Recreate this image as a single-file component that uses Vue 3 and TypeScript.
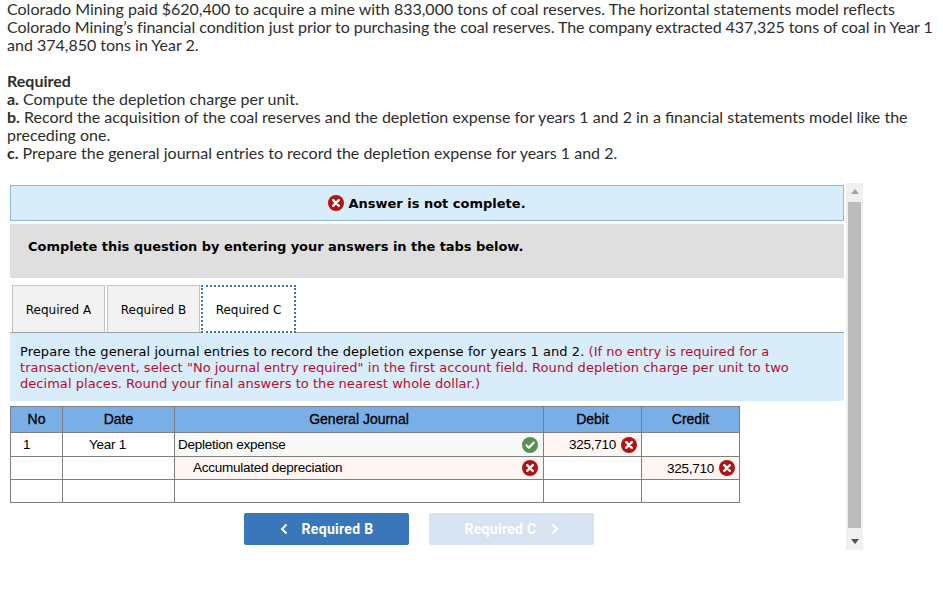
<script setup lang="ts">
interface Tab { label: string; active: boolean }
const tabs: Tab[] = [
  { label: 'Required A', active: false },
  { label: 'Required B', active: false },
  { label: 'Required C', active: true },
]
</script>

<template>
  <div class="page">
    <section class="problem">
      <p>Colorado Mining paid $620,400 to acquire a mine with 833,000 tons of coal reserves. The horizontal statements model reflects<br /><span class="tight">Colorado Mining’s financial condition just prior to purchasing the coal reserves. The company extracted 437,325 tons of coal in Year 1</span><br />and 374,850 tons in Year 2.</p>
      <p class="req-title"><b>Required</b></p>
      <p><b>a.</b> Compute the depletion charge per unit.<br /><b>b.</b> Record the acquisition of the coal reserves and the depletion expense for years 1 and 2 in a financial statements model like the<br />preceding one.<br /><b>c.</b> Prepare the general journal entries to record the depletion expense for years 1 and 2.</p>
    </section>

    <div class="workspace">
      <main class="panel">
        <div class="alert">
          <svg class="ic" viewBox="0 0 16 16"><circle cx="8" cy="8" r="8" fill="#b31312" /><path d="M5.2 5.2l5.6 5.6M10.8 5.2l-5.6 5.6" stroke="#fff" stroke-width="2.4" stroke-linecap="round" /></svg>
          <b>Answer is not complete.</b>
        </div>
        <div class="complete"><b>Complete this question by entering your answers in the tabs below.</b></div>
        <div class="tabs">
          <div v-for="t in tabs" :key="t.label" class="tab" :class="{ active: t.active }">{{ t.label }}</div>
        </div>
        <div class="instr"><span class="blk">Prepare the general journal entries to record the depletion expense for years 1 and 2. </span><span class="red">(If no entry is required for a<br />transaction/event, select "No journal entry required" in the first account field. Round depletion charge per unit to two<br />decimal places. Round your final answers to the nearest whole dollar.)</span></div>

        <table class="journal">
          <colgroup><col class="c1" /><col class="c2" /><col class="c3" /><col class="c4" /><col class="c5" /></colgroup>
          <thead>
            <tr><th>No</th><th>Date</th><th>General Journal</th><th>Debit</th><th>Credit</th></tr>
          </thead>
          <tbody>
            <tr class="r1">
              <td class="no">1</td>
              <td class="date">Year 1</td>
              <td class="acct ok"><div class="cell"><span>Depletion expense</span>
                <svg class="ic" viewBox="0 0 16 16"><circle cx="8" cy="8" r="8" fill="#5b8f57" /><path d="M4.4 8.3l2.5 2.4 4.7-5" fill="none" stroke="#fff" stroke-width="2.2" stroke-linecap="round" stroke-linejoin="round" /></svg></div></td>
              <td class="amt bad"><div class="cell end">325,710
                <svg class="ic" viewBox="0 0 16 16"><circle cx="8" cy="8" r="8" fill="#b31312" /><path d="M5.2 5.2l5.6 5.6M10.8 5.2l-5.6 5.6" stroke="#fff" stroke-width="2.4" stroke-linecap="round" /></svg></div></td>
              <td></td>
            </tr>
            <tr class="r2">
              <td></td>
              <td></td>
              <td class="acct bad"><div class="cell"><span class="indent">Accumulated depreciation</span>
                <svg class="ic" viewBox="0 0 16 16"><circle cx="8" cy="8" r="8" fill="#b31312" /><path d="M5.2 5.2l5.6 5.6M10.8 5.2l-5.6 5.6" stroke="#fff" stroke-width="2.4" stroke-linecap="round" /></svg></div></td>
              <td></td>
              <td class="amt bad"><div class="cell end">325,710
                <svg class="ic" viewBox="0 0 16 16"><circle cx="8" cy="8" r="8" fill="#b31312" /><path d="M5.2 5.2l5.6 5.6M10.8 5.2l-5.6 5.6" stroke="#fff" stroke-width="2.4" stroke-linecap="round" /></svg></div></td>
            </tr>
            <tr class="r3"><td></td><td></td><td></td><td></td><td></td></tr>
          </tbody>
        </table>

        <div class="nav">
          <button class="btn prev"><svg class="chev" viewBox="0 0 8 12"><path d="M6.5 1.5L2 6l4.5 4.5" fill="none" stroke="#fff" stroke-width="2" /></svg>Required B</button>
          <button class="btn next">Required C<svg class="chev" viewBox="0 0 8 12"><path d="M1.5 1.5L6 6l-4.5 4.5" fill="none" stroke="#fff" stroke-width="2" /></svg></button>
        </div>
      </main>

      <aside class="scrollbar">
        <svg class="arrow" viewBox="0 0 8 5"><path d="M4 0l4 5H0z" fill="#a3a3a3" /></svg>
        <div class="thumb"></div>
        <svg class="arrow" viewBox="0 0 8 5"><path d="M0 0h8L4 5z" fill="#505050" /></svg>
      </aside>
    </div>
  </div>
</template>

<style>
html, body { background: #fff; }
</style>

<style scoped>
.page { width: 943px; height: 604px; overflow: hidden; background: #fff; }
.problem {
  padding: 0 0 0 7px;
  font: 16px/18px Lato, "Open Sans", sans-serif;
  color: #2d2d2d;
  white-space: nowrap;
}
.problem p { margin: 0; }
.problem .req-title { margin-top: 18px; }
.problem b { font-weight: 700; color: #2d2d2d; }
.tight { letter-spacing: -0.045px; }
.workspace { display: flex; align-items: flex-start; margin: 23px 0 0 10px; gap: 2px; }
.panel { width: 834px; flex: none; }
.alert {
  height: 36px;
  box-sizing: border-box;
  border: 1px solid #8cb9e6;
  background: #d9ecfa;
  display: flex;
  align-items: center;
  justify-content: center;
  gap: 4px;
  font: 700 13px "DejaVu Sans", Verdana, sans-serif;
  color: #000;
}
.ic { width: 16px; height: 16px; flex: none; display: block; }
.complete {
  margin-top: 3px;
  height: 54px;
  box-sizing: border-box;
  padding: 14px 0 0 18px;
  background: #dfdfdf;
  font: 700 13px/18px "DejaVu Sans", Verdana, sans-serif;
  letter-spacing: -0.045px;
  color: #000;
}
.tabs {
  margin-top: 7px;
  padding-left: 2px;
  display: flex;
  gap: 2px;
  height: 47px;
  border-bottom: 1px solid #a0a0a0;
}
.tab {
  width: 93px;
  box-sizing: border-box;
  border: 1px solid #c4c4c4;
  border-bottom: 0;
  padding-top: 2px;
  background: #f2f2f2;
  display: flex;
  align-items: center;
  justify-content: center;
  font: 12px "DejaVu Sans", Verdana, sans-serif;
  color: #000;
}
.tab.active {
  width: 95px;
  margin-left: -1px;
  height: 48px;
  background: #fff;
  border: 2px dotted #3a72b0;
}
.instr {
  height: 68px;
  box-sizing: border-box;
  padding: 11px 10px 0;
  background: #d9ecfa;
  font: 13px/16px "DejaVu Sans", Verdana, sans-serif;
  color: #000;
  white-space: nowrap;
}
.blk { letter-spacing: 0.065px; }
.red { color: #b01030; letter-spacing: 0.04px; }
.journal {
  margin-top: 5px;
  width: 729px;
  table-layout: fixed;
  border-collapse: collapse;
  font: 13.5px "Liberation Sans", Arial, sans-serif;
  letter-spacing: -0.25px;
  color: #000;
}
.c1 { width: 52px; }
.c2 { width: 112px; }
.c3 { width: 369px; }
.c4 { width: 98px; }
.c5 { width: 98px; }
.journal th, .journal td { border: 1px solid #7f7f7f; padding: 0; }
.journal th { background: #7aaee6; height: 23px; padding-bottom: 2px; font-size: 14px; letter-spacing: 0; font-weight: 400; -webkit-text-stroke: 0.3px #000; }
.r1 td { height: 23px; }
.r2 td { height: 22px; }
.r3 td { height: 22px; }
.no { padding-left: 12px !important; }
.date { text-align: left; padding-left: 26px !important; }
.ok { background: #f6f9f6; }
.bad { background: #fff5f3; }
.cell { display: flex; align-items: center; justify-content: space-between; padding: 0 3px 0 3px; }
.acct .cell { padding-right: 5px; }
.cell.end { justify-content: flex-end; gap: 5px; padding-right: 4px; }
.indent { padding: 0 0 2px 15px; }
.nav { display: flex; gap: 20px; margin: 10px 0 0 234px; }
.btn {
  width: 165px;
  height: 32px;
  border: 0;
  border-radius: 2px;
  display: flex;
  align-items: center;
  justify-content: center;
  gap: 14px;
  font: 700 14px Roboto, "Liberation Sans", sans-serif;
  letter-spacing: 0.3px;
  color: #fff;
  padding: 0;
}
.prev { background: #3a76ba; }
.next { background: #d8e3f1; }
.chev { width: 8px; height: 12px; display: block; }
.scrollbar {
  width: 17px;
  height: 367px;
  margin-top: -2px;
  background: #f0f0f0;
  display: flex;
  flex-direction: column;
  align-items: center;
  justify-content: space-between;
  padding: 6px 0;
  box-sizing: border-box;
}
.arrow { width: 8px; height: 5px; display: block; flex: none; }
.thumb { width: 13px; height: 326px; background: #bcbcbc; margin-top: 6px; margin-bottom: 9px; }
</style>
